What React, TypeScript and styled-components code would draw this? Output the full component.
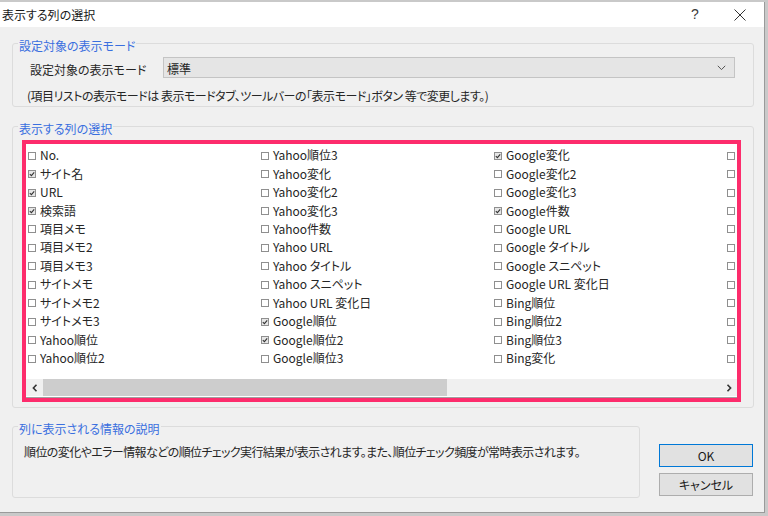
import React from 'react';
import styled, { createGlobalStyle } from 'styled-components';

const GlobalStyle = createGlobalStyle`
    html, body {
        margin: 0;
        padding: 0;
        background: #c9c9c9;
        width: 768px;
        height: 516px;
        overflow: hidden;
    }
    * {
        box-sizing: border-box;
    }
`;

const FONT = `"Noto Sans CJK JP", "Noto Sans", sans-serif`;

interface IColumnItem {
    label: string;
    checked?: boolean;
}

const COLUMNS: IColumnItem[][] = [
    [
        { label: 'No.' },
        { label: 'サイト名', checked: true },
        { label: 'URL', checked: true },
        { label: '検索語', checked: true },
        { label: '項目メモ' },
        { label: '項目メモ2' },
        { label: '項目メモ3' },
        { label: 'サイトメモ' },
        { label: 'サイトメモ2' },
        { label: 'サイトメモ3' },
        { label: 'Yahoo順位' },
        { label: 'Yahoo順位2' }
    ],
    [
        { label: 'Yahoo順位3' },
        { label: 'Yahoo変化' },
        { label: 'Yahoo変化2' },
        { label: 'Yahoo変化3' },
        { label: 'Yahoo件数' },
        { label: 'Yahoo URL' },
        { label: 'Yahoo タイトル' },
        { label: 'Yahoo スニペット' },
        { label: 'Yahoo URL 変化日' },
        { label: 'Google順位', checked: true },
        { label: 'Google順位2', checked: true },
        { label: 'Google順位3' }
    ],
    [
        { label: 'Google変化', checked: true },
        { label: 'Google変化2' },
        { label: 'Google変化3' },
        { label: 'Google件数', checked: true },
        { label: 'Google URL' },
        { label: 'Google タイトル' },
        { label: 'Google スニペット' },
        { label: 'Google URL 変化日' },
        { label: 'Bing順位' },
        { label: 'Bing順位2' },
        { label: 'Bing順位3' },
        { label: 'Bing変化' }
    ],
    Array.from({ length: 12 }, () => ({ label: '' }))
];

const CheckBox: React.FC<{ checked?: boolean }> = ({ checked }) => (
    <BoxSvg width='8' height='8' viewBox='0 0 8 8'>
        <rect x='0.5' y='0.5' width='7' height='7' fill={checked ? '#e6e6e6' : '#ffffff'} stroke='#8f8f8f' />
        {checked && <path d='M1.8 4.1 L3.4 5.6 L6.2 2.3' fill='none' stroke='#333' strokeWidth='1.1' />}
    </BoxSvg>
);

const App: React.FC = (): React.ReactElement => (
    <>
        <GlobalStyle />
        <Dialog>
            <TitleBar>
                <TitleText>表示する列の選択</TitleText>
                <TitleButtons>
                    <HelpButton>?</HelpButton>
                    <CloseButton>
                        <svg width='12' height='12' viewBox='0 0 12 12'>
                            <path d='M0.5 0.5 L11.5 11.5 M11.5 0.5 L0.5 11.5' stroke='#333' strokeWidth='1' />
                        </svg>
                    </CloseButton>
                </TitleButtons>
            </TitleBar>
            <Body>
                <GroupBox>
                    <Legend>設定対象の表示モード</Legend>
                    <ModeInner>
                        <ModeRow>
                            <ModeLabel>設定対象の表示モード</ModeLabel>
                            <Combo>
                                <span>標準</span>
                                <svg width='9' height='6' viewBox='0 0 9 6'>
                                    <path d='M0.8 0.8 L4.5 4.6 L8.2 0.8' fill='none' stroke='#555' strokeWidth='1' />
                                </svg>
                            </Combo>
                        </ModeRow>
                        <Note>(項目リストの表示モードは 表示モードタブ、ツールバーの「表示モード」ボタン 等で変更します。)</Note>
                    </ModeInner>
                </GroupBox>
                <GroupBox>
                    <Legend>表示する列の選択</Legend>
                    <ListInner>
                        <Highlight>
                            <ListBox>
                                <ItemGrid>
                                    {COLUMNS.map((col, ci) => col.map((item, ri) => (
                                        <Item key={`${ci}-${ri}`}>
                                            <CheckBox checked={item.checked} />
                                            <ItemLabel>{item.label}</ItemLabel>
                                        </Item>
                                    )))}
                                </ItemGrid>
                                <ScrollBar>
                                    <ArrowButton>
                                        <svg width='6' height='8' viewBox='0 0 6 8'>
                                            <path d='M4.5 0.8 L1.4 4 L4.5 7.2' fill='none' stroke='#333' strokeWidth='1.6' />
                                        </svg>
                                    </ArrowButton>
                                    <Track>
                                        <Thumb />
                                    </Track>
                                    <ArrowButton>
                                        <svg width='6' height='8' viewBox='0 0 6 8'>
                                            <path d='M1.5 0.8 L4.6 4 L1.5 7.2' fill='none' stroke='#333' strokeWidth='1.6' />
                                        </svg>
                                    </ArrowButton>
                                </ScrollBar>
                            </ListBox>
                        </Highlight>
                    </ListInner>
                </GroupBox>
                <BottomRow>
                    <DescGroup>
                        <Legend>列に表示される情報の説明</Legend>
                        <DescText>順位の変化やエラー情報などの順位チェック実行結果が表示されます。また、順位チェック頻度が常時表示されます。</DescText>
                    </DescGroup>
                    <ButtonColumn>
                        <Button primary>OK</Button>
                        <Button>キャンセル</Button>
                    </ButtonColumn>
                </BottomRow>
            </Body>
        </Dialog>
    </>
);

export default App;

const Dialog = styled.div`
    margin-top: 2px;
    width: 765px;
    height: 511px;
    background: #f0f0f0;
    border-right: 1px solid #9a9a9a;
    border-bottom: 1px solid #9a9a9a;
    display: flex;
    flex-direction: column;
    font-family: ${FONT};
    font-feature-settings: "palt";
    font-size: 12px;
    color: #262626;
`;

const TitleBar = styled.div`
    height: 25px;
    background: #ffffff;
    display: flex;
    align-items: center;
    justify-content: space-between;
    padding-left: 2px;
`;

const TitleText = styled.div`
    font-size: 12px;
    color: #1a1a1a;
`;

const TitleButtons = styled.div`
    display: flex;
    height: 100%;
`;

const HelpButton = styled.div`
    width: 46px;
    display: flex;
    align-items: center;
    justify-content: center;
    font-family: "Liberation Sans", sans-serif;
    font-size: 14px;
    color: #3a3a3a;
    padding-bottom: 1px;
`;

const CloseButton = styled.div`
    width: 46px;
    display: flex;
    align-items: center;
    justify-content: center;
    padding-right: 2px;
`;

const Body = styled.div`
    flex: 1;
    display: flex;
    flex-direction: column;
    padding: 6px 10px 0 12px;
`;

const GroupBox = styled.fieldset`
    margin: 0 0 9px 0;
    padding: 0;
    border: 1px solid #dcdcdc;
    border-radius: 3px;
    min-width: 0;
`;

const Legend = styled.legend`
    margin-left: 5px;
    padding: 6px 1px 0 1px;
    line-height: 14px;
    color: #3a6fdf;
    font-size: 12px;
`;

const ModeInner = styled.div`
    padding: 4px 18px 2px 14px;
    display: flex;
    flex-direction: column;
    gap: 10px;
`;

const ModeRow = styled.div`
    display: flex;
    align-items: center;
    height: 21px;
`;

const ModeLabel = styled.div`
    width: 133px;
    margin-left: 3px;
    padding-top: 4px;
`;

const Combo = styled.div`
    flex: 1;
    height: 21px;
    background: #e5e5e5;
    border: 1px solid #c4c4c4;
    display: flex;
    align-items: center;
    justify-content: space-between;
    padding: 1px 8px 0 3px;
`;

const Note = styled.div`
    line-height: 16px;
    letter-spacing: -0.5px;
`;

const ListInner = styled.div`
    padding: 4px 12px 5px 9px;
`;

const Highlight = styled.div`
    border: 4px solid #fd2c6c;
    height: 262px;
`;

const ListBox = styled.div`
    height: 100%;
    background: #ffffff;
    border-bottom: 1px solid #a0a0a0;
    display: flex;
    flex-direction: column;
    overflow: hidden;
`;

const ItemGrid = styled.div`
    flex: 1;
    display: grid;
    grid-auto-flow: column;
    grid-template-rows: repeat(12, 18.45px);
    grid-auto-columns: 233px;
    padding: 2px 0 0 2px;
    overflow: hidden;
`;

const Item = styled.div`
    display: flex;
    align-items: center;
    gap: 4px;
    white-space: nowrap;
`;

const BoxSvg = styled.svg`
    flex: none;
    margin-top: 1px;
`;

const ItemLabel = styled.span`
    line-height: 16px;
`;

const ScrollBar = styled.div`
    height: 17px;
    display: flex;
    margin-bottom: 1px;
    background: #f0f0f0;
`;

const ArrowButton = styled.div`
    width: 17px;
    display: flex;
    align-items: center;
    justify-content: center;
`;

const Track = styled.div`
    flex: 1;
    display: flex;
`;

const Thumb = styled.div`
    width: 404px;
    background: #cdcdcd;
`;

const BottomRow = styled.div`
    display: flex;
    gap: 19px;
    margin-top: -1px;
`;

const DescGroup = styled(GroupBox)`
    width: 628px;
    height: 82px;
    margin: 0;
`;

const DescText = styled.div`
    line-height: 16px;
    padding: 8px 10px 0 11px;
    letter-spacing: -0.6px;
`;

const ButtonColumn = styled.div`
    display: flex;
    flex-direction: column;
    gap: 6px;
    padding-top: 28px;
`;

const Button = styled.div<{ primary?: boolean }>`
    width: 94px;
    height: 23px;
    background: #e1e1e1;
    border: 1px solid ${({ primary }) => (primary ? '#0078d7' : '#adadad')};
    display: flex;
    align-items: center;
    justify-content: center;
    color: #1a1a1a;
`;
